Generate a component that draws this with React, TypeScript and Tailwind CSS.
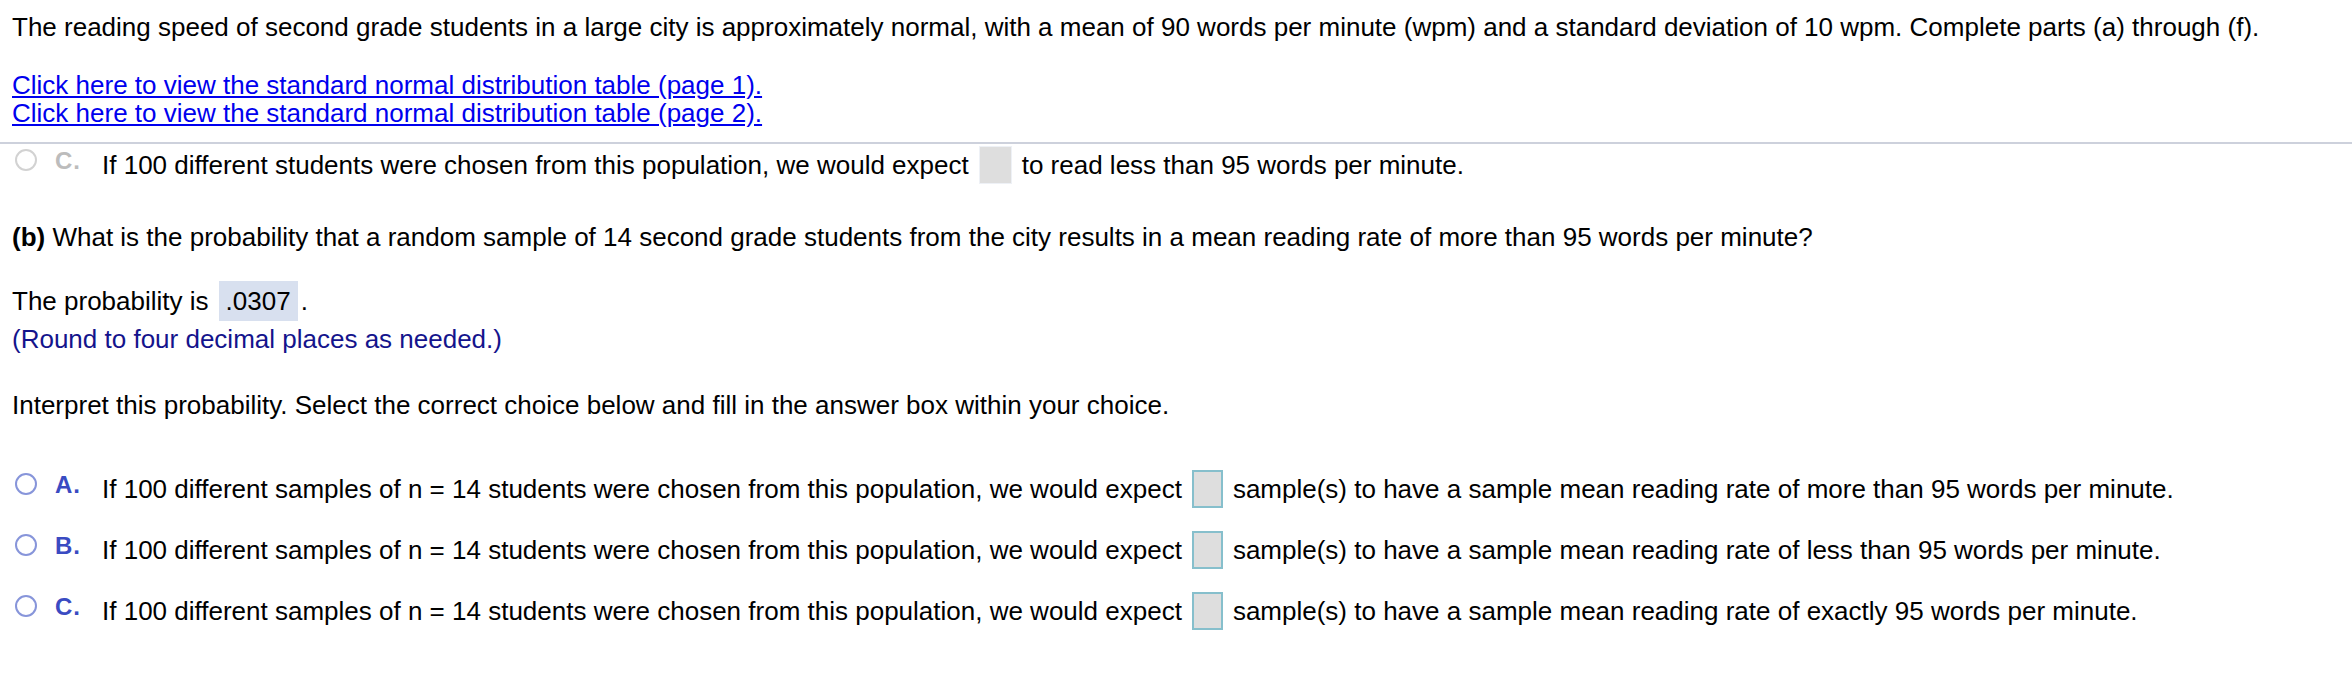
import React from 'react';

interface ChoiceProps {
  letter: string;
  before: string;
  after: string;
  faded?: boolean;
}

const Choice: React.FC<ChoiceProps> = ({ letter, before, after, faded = false }) => {
  return (
    <div className="flex items-center h-[40px] pl-[15px]">
      <span
        className={`w-[22px] h-[22px] rounded-full border-[2.5px] bg-white shrink-0 mb-[10px] ${
          faded ? 'border-[#d2d2d2]' : 'border-[#8795da]'
        }`}
      />
      <span
        className={`ml-[18px] w-[47px] shrink-0 text-[24px] leading-[26px] font-bold tracking-[1px] mb-[8px] ${
          faded ? 'text-[#bcbcbc]' : 'text-[#3a4bc2]'
        }`}
      >
        {letter}.
      </span>
      <span>{before}</span>
      {faded ? (
        <span className="mx-[10px] w-[33px] h-[38px] bg-[#dedede] border border-[#eef1f6]" />
      ) : (
        <span className="mx-[10px] w-[31px] h-[38px] bg-[#dedede] border-2 border-[#86bfcc]" />
      )}
      <span>{after}</span>
    </div>
  );
};

const App: React.FC = () => {
  return (
    <div className="min-h-[686px] w-full bg-white text-black font-['Liberation_Sans',Arial,sans-serif] text-[26px] leading-[30px]">
      <div className="pl-3 pt-3">
        <p>
          The reading speed of second grade students in a large city is approximately normal, with a
          mean of 90 words per minute (wpm) and a standard deviation of 10 wpm. Complete parts (a)
          through (f).
        </p>
        <div className="mt-[29px] leading-[28px] text-[#0000ee]">
          <div>
            <a className="underline" href="#">
              Click here to view the standard normal distribution table (page 1).
            </a>
          </div>
          <div>
            <a className="underline" href="#">
              Click here to view the standard normal distribution table (page 2).
            </a>
          </div>
        </div>
      </div>

      <div className="mt-[15px] h-[2px] bg-[#cdd1dc]" />

      <div className="mt-[1px]">
        <Choice
          faded
          letter="C"
          before="If 100 different students were chosen from this population, we would expect"
          after="to read less than 95 words per minute."
        />
      </div>

      <div className="pl-3">
        <p className="mt-[37px]">
          <span className="font-bold">(b)</span> What is the probability that a random sample of 14
          second grade students from the city results in a mean reading rate of more than 95 words
          per minute?
        </p>

        <div className="mt-[29px] flex items-center h-[40px]">
          <span>The probability is</span>
          <span className="ml-[10px] h-[40px] px-[7px] flex items-center bg-[#d8e0ef]">.0307</span>
          <span className="ml-[3px]">.</span>
        </div>
        <p className="mt-[3px] text-[#14148c]">(Round to four decimal places as needed.)</p>

        <p className="mt-[36px]">
          Interpret this probability. Select the correct choice below and fill in the answer box
          within your choice.
        </p>
      </div>

      <div className="mt-[49px] flex flex-col gap-[21px]">
        <Choice
          letter="A"
          before="If 100 different samples of n = 14 students were chosen from this population, we would expect"
          after="sample(s) to have a sample mean reading rate of more than 95 words per minute."
        />
        <Choice
          letter="B"
          before="If 100 different samples of n = 14 students were chosen from this population, we would expect"
          after="sample(s) to have a sample mean reading rate of less than 95 words per minute."
        />
        <Choice
          letter="C"
          before="If 100 different samples of n = 14 students were chosen from this population, we would expect"
          after="sample(s) to have a sample mean reading rate of exactly 95 words per minute."
        />
      </div>
    </div>
  );
};

export default App;
